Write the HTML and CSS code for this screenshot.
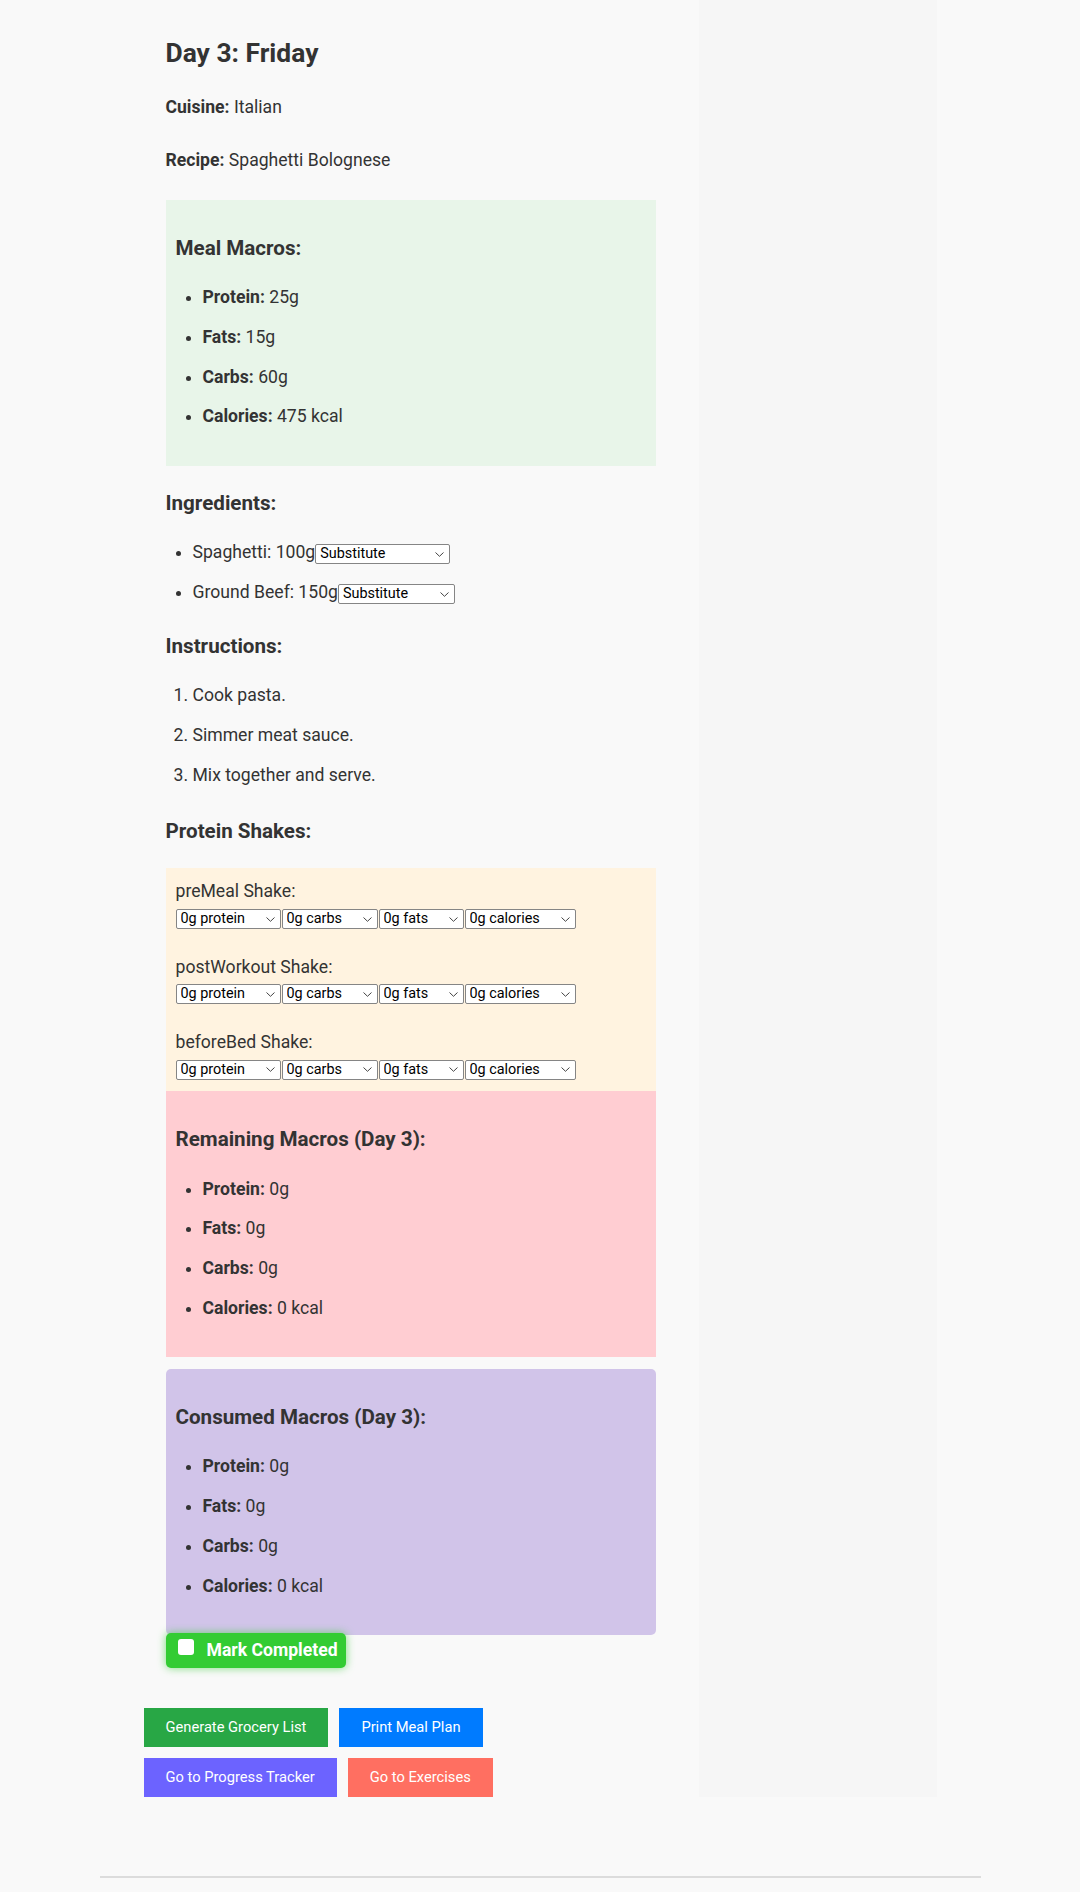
FILE: index.html
```html
<!DOCTYPE html>
<html lang="en">
<head>
<meta charset="utf-8">
<title>Meal Plan - Day 3</title>
<link rel="stylesheet" href="styles.css">
</head>
<body>
<div class="page">
  <div class="layout">
    <main class="main-col">
      <section class="day-card">
        <h2 class="day-title">Day 3: Friday</h2>
        <p class="meta"><strong>Cuisine:</strong> Italian</p>
        <p class="meta"><strong>Recipe:</strong> Spaghetti Bolognese</p>

        <div class="macro-box box-meal">
          <h3>Meal Macros:</h3>
          <ul class="box-list">
            <li><strong>Protein:</strong> 25g</li>
            <li><strong>Fats:</strong> 15g</li>
            <li><strong>Carbs:</strong> 60g</li>
            <li><strong>Calories:</strong> 475 kcal</li>
          </ul>
        </div>

        <h3>Ingredients:</h3>
        <ul class="list">
          <li>Spaghetti: 100g<select class="sel sel-sub-a"><option>Substitute</option><option>Whole Wheat Pasta</option><option>Zucchini Noodles</option></select></li>
          <li>Ground Beef: 150g<select class="sel sel-sub-b"><option>Substitute</option><option>Ground Turkey</option><option>Lentils</option></select></li>
        </ul>

        <h3>Instructions:</h3>
        <ol class="list list-ol">
          <li>Cook pasta.</li>
          <li>Simmer meat sauce.</li>
          <li>Mix together and serve.</li>
        </ol>

        <h3>Protein Shakes:</h3>
        <div class="shakes">
          <div class="shake">
            <label class="shake-label">preMeal Shake:</label>
            <div class="shake-row">
              <select class="sel sel-protein"><option>0g protein</option><option>25g protein</option></select><select class="sel sel-carbs"><option>0g carbs</option><option>10g carbs</option></select><select class="sel sel-fats"><option>0g fats</option><option>5g fats</option></select><select class="sel sel-cal"><option>0g calories</option><option>150 calories</option></select>
            </div>
          </div>
          <div class="shake">
            <label class="shake-label">postWorkout Shake:</label>
            <div class="shake-row">
              <select class="sel sel-protein"><option>0g protein</option><option>25g protein</option></select><select class="sel sel-carbs"><option>0g carbs</option><option>10g carbs</option></select><select class="sel sel-fats"><option>0g fats</option><option>5g fats</option></select><select class="sel sel-cal"><option>0g calories</option><option>150 calories</option></select>
            </div>
          </div>
          <div class="shake">
            <label class="shake-label">beforeBed Shake:</label>
            <div class="shake-row">
              <select class="sel sel-protein"><option>0g protein</option><option>25g protein</option></select><select class="sel sel-carbs"><option>0g carbs</option><option>10g carbs</option></select><select class="sel sel-fats"><option>0g fats</option><option>5g fats</option></select><select class="sel sel-cal"><option>0g calories</option><option>150 calories</option></select>
            </div>
          </div>
        </div>

        <div class="macro-box box-remaining">
          <h3>Remaining Macros (Day 3):</h3>
          <ul class="box-list">
            <li><strong>Protein:</strong> 0g</li>
            <li><strong>Fats:</strong> 0g</li>
            <li><strong>Carbs:</strong> 0g</li>
            <li><strong>Calories:</strong> 0 kcal</li>
          </ul>
        </div>

        <div class="macro-box box-consumed">
          <h3>Consumed Macros (Day 3):</h3>
          <ul class="box-list">
            <li><strong>Protein:</strong> 0g</li>
            <li><strong>Fats:</strong> 0g</li>
            <li><strong>Carbs:</strong> 0g</li>
            <li><strong>Calories:</strong> 0 kcal</li>
          </ul>
        </div>

        <label class="complete-btn"><input type="checkbox" class="complete-check">Mark Completed</label>
      </section>

      <div class="actions">
        <button class="btn btn-grocery">Generate Grocery List</button>
        <button class="btn btn-print">Print Meal Plan</button>
        <button class="btn btn-progress">Go to Progress Tracker</button>
        <button class="btn btn-exercises">Go to Exercises</button>
      </div>
    </main>
    <aside class="sidebar"></aside>
  </div>
  <footer class="footer"></footer>
</div>
</body>
</html>
```

FILE: styles.css
```css
* { box-sizing: border-box; }

html, body {
  margin: 0;
  padding: 0;
  background: #f9f9f9;
}

body {
  font-family: Roboto, "Liberation Sans", Arial, sans-serif;
  font-size: 17.6px;
  line-height: 28.8px;
  color: #333;
}

.page {
  width: 881px;
  margin: 0 auto;
}

.layout {
  display: flex;
  align-items: stretch;
  gap: 21px;
  padding: 0 44px;
}

.main-col {
  width: 534px;
  flex: 0 0 534px;
}

.sidebar {
  flex: 0 0 238px;
  background: #f6f6f6;
}

.day-card {
  padding: 0 22px;
}

.day-title {
  font-size: 26.4px;
  line-height: 32px;
  font-weight: 700;
  margin: 37px 0 0;
}

.meta {
  margin: 24px 0;
}

h3 {
  font-size: 20.6px;
  line-height: 25px;
  font-weight: 700;
  margin: 21px 0 22.5px;
}

.list {
  padding-left: 27px;
  margin: 0 0 27px;
}

.list-ol {
  margin-bottom: 29px;
}

.list li,
.box-list li {
  margin: 0 0 11px;
}

.macro-box {
  padding: 15px 10px 16.5px;
  margin: 25px 0;
}

.macro-box h3 {
  margin-top: 21px;
}

.box-list {
  padding-left: 27px;
  margin: 0 0 18px;
}

.box-meal { background: #e8f5e9; }

.box-remaining {
  background: #ffcdd2;
  margin-top: 0;
  margin-bottom: 11.5px;
}

.box-consumed {
  background: #d1c4e9;
  border-radius: 5px;
  margin-top: 0;
  margin-bottom: 0;
}

.shakes {
  background: #fff3e0;
  margin-top: 24px;
  padding: 9.5px 10px 11.5px;
  display: flex;
  flex-direction: column;
  gap: 23.5px;
}

.shake-label {
  display: block;
  line-height: 28.8px;
}

.shake-row {
  display: flex;
  gap: 1px;
  margin-top: 3px;
}

.sel {
  appearance: none;
  -webkit-appearance: none;
  font-family: Roboto, "Liberation Sans", Arial, sans-serif;
  font-size: 14.4px;
  line-height: 18px;
  height: 20px;
  margin: 0;
  padding: 0 18px 0 4px;
  color: #000;
  border: 1px solid #858585;
  border-radius: 2px;
  background-color: #fff;
  background-image: url("data:image/svg+xml,%3Csvg xmlns='http://www.w3.org/2000/svg' width='9' height='5' viewBox='0 0 9 5'%3E%3Cpath d='M0.5 0.5L4.5 4.3L8.5 0.5' fill='none' stroke='%23444' stroke-width='1'/%3E%3C/svg%3E");
  background-repeat: no-repeat;
  background-position: right 5px center;
  vertical-align: baseline;
}

.sel-sub-a { width: 135px; }
.sel-sub-b { width: 117px; }
.sel-protein { width: 105px; }
.sel-carbs { width: 96px; }
.sel-fats { width: 85px; }
.sel-cal { width: 111px; }

.complete-btn {
  display: inline-flex;
  align-items: center;
  margin-top: -3px;
  padding: 3.5px 8px 3.5px 12px;
  background: #33cc33;
  color: #fff;
  font-weight: 700;
  line-height: 28.8px;
  border-radius: 5px;
  box-shadow: 0 0 9px rgba(50, 205, 50, 0.65);
  position: relative;
}

.complete-check {
  appearance: none;
  -webkit-appearance: none;
  width: 16px;
  height: 16px;
  margin: 0 13px 7px 0;
  background: #fff;
  border-radius: 3px;
  border: none;
}

.actions {
  display: flex;
  flex-wrap: wrap;
  gap: 11px;
  width: 400px;
  margin-top: 40px;
}

.btn {
  font-family: Roboto, "Liberation Sans", Arial, sans-serif;
  font-size: 14.7px;
  line-height: 17px;
  color: #fff;
  border: none;
  padding: 11px 22px;
  cursor: pointer;
}

.btn-grocery { background: #28a745; }
.btn-print { background: #007bff; }
.btn-progress { background: #6c63ff; }
.btn-exercises { background: #ff6f61; }

.footer {
  margin-top: 79px;
  border-top: 2px solid #dcdcdc;
  height: 40px;
}
```
